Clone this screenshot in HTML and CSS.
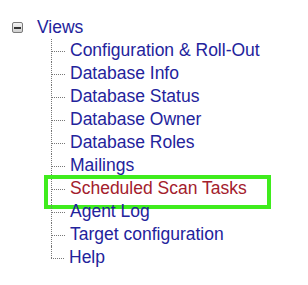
FILE: index.html
```html
<!DOCTYPE html>
<html lang="en">
  <head>
    <meta charset="UTF-8" />
    <title>Views</title>
    <link rel="stylesheet" href="styles.css">
  </head>
  <body>
    <div class="tree">
      <div class="root">
        <span class="toggle"><span class="minus"></span></span>
        <a class="node-link" href="#">Views</a>
      </div>
      <ul class="children">
        <li><a href="#">Configuration &amp; Roll-Out</a></li>
        <li><a href="#">Database Info</a></li>
        <li><a href="#">Database Status</a></li>
        <li><a href="#">Database Owner</a></li>
        <li><a href="#">Database Roles</a></li>
        <li><a href="#">Mailings</a></li>
        <li class="selected"><a href="#">Scheduled Scan Tasks</a></li>
        <li><a href="#">Agent Log</a></li>
        <li><a href="#">Target configuration</a></li>
        <li class="last"><a href="#">Help</a></li>
      </ul>
    </div>
  </body>
</html>
```

FILE: styles.css
```css
* {
  margin: 0;
  padding: 0;
  box-sizing: border-box;
}

body {
  font-family: "Liberation Sans", Arial, sans-serif;
  font-size: 17.5px;
  background: #fff;
}

a {
  color: #23239c;
  text-decoration: none;
}

.tree {
  padding: 16px 0 0 12px;
}

.root {
  display: flex;
  align-items: center;
  height: 23px;
}

.toggle {
  width: 11px;
  height: 11px;
  border: 1px solid #7a7a7a;
  border-radius: 2px;
  background: linear-gradient(#f4f4f4, #cfcfcf);
  display: flex;
  align-items: center;
  justify-content: center;
  margin-right: 14px;
}

.minus {
  width: 7px;
  height: 2px;
  background: #333;
}

.children {
  list-style: none;
  margin-left: 39px;
  position: relative;
}

.children li {
  height: 23px;
  line-height: 23px;
  padding-left: 18px;
  position: relative;
  border-left: 1px dotted #777;
  white-space: nowrap;
}

.children li::before {
  content: "";
  position: absolute;
  left: 0;
  top: 12px;
  width: 13px;
  border-top: 1px dotted #777;
}

.children li.last {
  border-left: none;
}

.children li.last::after {
  content: "";
  position: absolute;
  left: 0;
  top: 0;
  height: 12px;
  border-left: 1px dotted #777;
}

.children li.selected a {
  color: #a3202c;
}

.children li.selected::after {
  content: "";
  position: absolute;
  left: -8px;
  top: -2px;
  width: 219px;
  height: 26px;
  border: 4px solid #3fec1d;
  pointer-events: none;
}
```
